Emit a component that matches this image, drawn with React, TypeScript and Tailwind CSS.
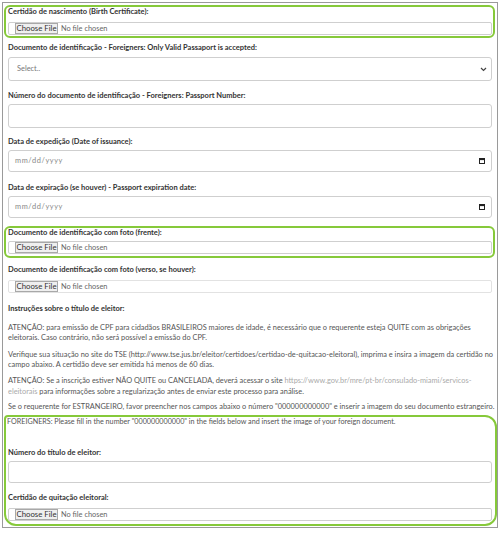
import React from 'react';

const font = { fontFamily: 'Lato, "Open Sans", sans-serif' };

function Label({ children, className = '' }: { children: React.ReactNode; className?: string }) {
  return <p className={'text-[7.5px] font-bold text-[#333] leading-[10px] ' + className}>{children}</p>;
}

function FileInput({ light, className = '' }: { light?: boolean; className?: string }) {
  return (
    <div
      className={
        'flex items-center h-[13px] border rounded-[2px] bg-white pl-[6px] ' +
        (light ? 'border-[#e2e2e2] ' : 'border-[#cfcfcf] ') +
        className
      }
    >
      <span className="h-[11px] w-[43px] flex items-center justify-center border border-[#a8a8a8] bg-[#efefef] text-[7.8px] text-[#333] leading-none">
        Choose File
      </span>
      <span className="ml-[3px] text-[7.4px] text-[#666] leading-none">No file chosen</span>
    </div>
  );
}

function DateInput() {
  return (
    <div className="mt-[3px] h-[22px] border border-[#cfcfcf] rounded-[3px] bg-white flex items-center justify-between pl-[6px] pr-[6px]">
      <span className="text-[7.4px] text-[#888] tracking-[0.6px]">mm/dd/yyyy</span>
      <svg width="6" height="6" viewBox="0 0 6 6">
        <rect x="0.5" y="0.5" width="5" height="5" fill="none" stroke="#222" strokeWidth="1" />
        <rect x="0.5" y="0.5" width="5" height="1.6" fill="#222" />
      </svg>
    </div>
  );
}

export default function App() {
  return (
    <div className="w-[500px] h-[533px] bg-white pl-[2px] pt-[2px]" style={font}>
      <div className="w-[496px] h-[526px] border border-[#9a9a9a] px-[5px]">
        {/* birth certificate */}
        <div className="mt-[2px] -ml-[4px] -mr-[3px] border-2 border-[#86c93a] rounded-[6px] pl-[2px] pr-[1px] pb-[1px]">
          <Label>Certidão de nascimento (Birth Certificate):</Label>
          <FileInput className="mt-[5px]" />
        </div>

        <Label className="mt-[5px]">Documento de identificação - Foreigners: Only Valid Passaport is accepted:</Label>
        <div className="mt-[4px] h-[24px] border border-[#cfcfcf] rounded-[3px] flex items-center justify-between pl-[8px] pr-[4px]">
          <span className="text-[7.4px] text-[#777]">Select..</span>
          <svg width="7" height="5" viewBox="0 0 7 5">
            <path d="M1 1 L3.5 3.5 L6 1" fill="none" stroke="#444" strokeWidth="1.2" />
          </svg>
        </div>

        <Label className="mt-[10px]">Número do documento de identificação - Foreigners: Passport Number:</Label>
        <div className="mt-[3px] h-[24px] border border-[#cfcfcf] rounded-[3px]" />

        <Label className="mt-[9px]">Data de expedição (Date of issuance):</Label>
        <DateInput />

        <Label className="mt-[11px]">Data de expiração (se houver) - Passport expiration date:</Label>
        <DateInput />

        {/* id front */}
        <div className="mt-[8px] -ml-[4px] -mr-[3px] border-2 border-[#86c93a] rounded-[6px] pl-[2px] pr-[1px] pb-[2px]">
          <Label>Documento de identificação com foto (frente):</Label>
          <FileInput className="mt-[3px]" />
        </div>

        <Label className="mt-[7px]">Documento de identificação com foto (verso, se houver):</Label>
        <FileInput light className="mt-[5px] h-[12px]" />

        <Label className="mt-[11px]">Instruções sobre o título de eleitor:</Label>
        <div className="text-[7.4px] text-[#555] leading-[10px]">
          <p className="mt-[9px]">
            ATENÇÃO: para emissão de CPF para cidadãos BRASILEIROS maiores de idade, é necessário que o requerente esteja QUITE com as obrigações eleitorais. Caso contrário, não será possível a emissão do CPF.
          </p>
          <p className="mt-[7px] -mr-[4px]">
            Verifique sua situação no site do TSE (http://www.tse.jus.br/eleitor/certidoes/certidao-de-quitacao-eleitoral), imprima e insira a imagem da certidão no campo abaixo. A certidão deve ser emitida há menos de 60 dias.
          </p>
          <p className="mt-[5px] leading-[11px]">
            ATENÇÃO: Se a inscrição estiver NÃO QUITE ou CANCELADA, deverá acessar o site{' '}
            <span className="text-[#aaa]">https://www.gov.br/mre/pt-br/consulado-miami/servicos-eleitorais</span> para informações sobre a regularização antes de enviar este processo para análise.
          </p>
          <p className="mt-[5px] -mr-[4px]">
            Se o requerente for ESTRANGEIRO, favor preencher nos campos abaixo o número "000000000000" e inserir a imagem do seu documento estrangeiro.
          </p>
        </div>

        {/* foreigners */}
        <div className="mt-[3px] -ml-[4px] -mr-[5px] border-2 border-[#86c93a] rounded-[12px] rounded-tl-[4px] pl-[2px] pr-[3px] pb-[3px]">
          <p className="text-[7.2px] text-[#555] leading-[9px] -ml-[1px]">
            FOREIGNERS: Please fill in the number "000000000000" in the fields below and insert the image of your foreign document.
          </p>
          <Label className="mt-[22px]">Número do título de eleitor:</Label>
          <div className="mt-[3px] h-[22px] border border-[#cfcfcf] rounded-[3px]" />
          <Label className="mt-[10px]">Certidão de quitação eleitoral:</Label>
          <FileInput className="mt-[5px] h-[12px]" />
        </div>
      </div>
    </div>
  );
}
